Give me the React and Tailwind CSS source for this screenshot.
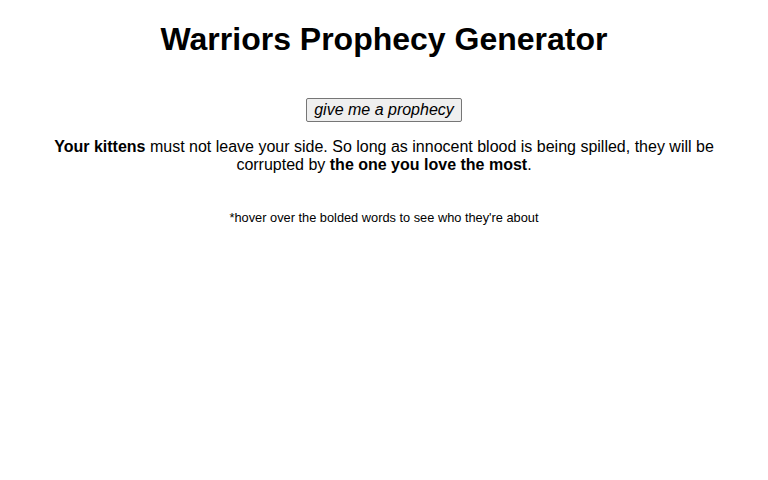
export default function App() {
  return (
    <div className="flex min-h-screen flex-col items-center bg-white px-6 text-center text-black font-['Liberation_Sans',Arial,sans-serif]">
      <h1 className="mt-[21px] text-[32px] font-bold leading-[37px]">Warriors Prophecy Generator</h1>

      <button
        type="button"
        className="mt-[40px] rounded-[2px] border border-[#767676] bg-[#efefef] px-[7px] py-[2px] text-[16px] italic leading-[18px] text-black hover:bg-[#e5e5e5]"
      >
        give me a prophecy
      </button>

      {/* generated prophecy; bold words carry a tooltip */}
      <p className="mt-[16px] text-[16px] leading-[18px]">
        <b title="your apprentice">Your kittens</b> must not leave your side. So long as innocent blood is being spilled, they will be corrupted by{' '}
        <b title="your mate">the one you love the most</b>.
      </p>

      <p className="mt-[36px] text-[12.8px] leading-[15px]">*hover over the bolded words to see who they're about</p>
    </div>
  );
}
